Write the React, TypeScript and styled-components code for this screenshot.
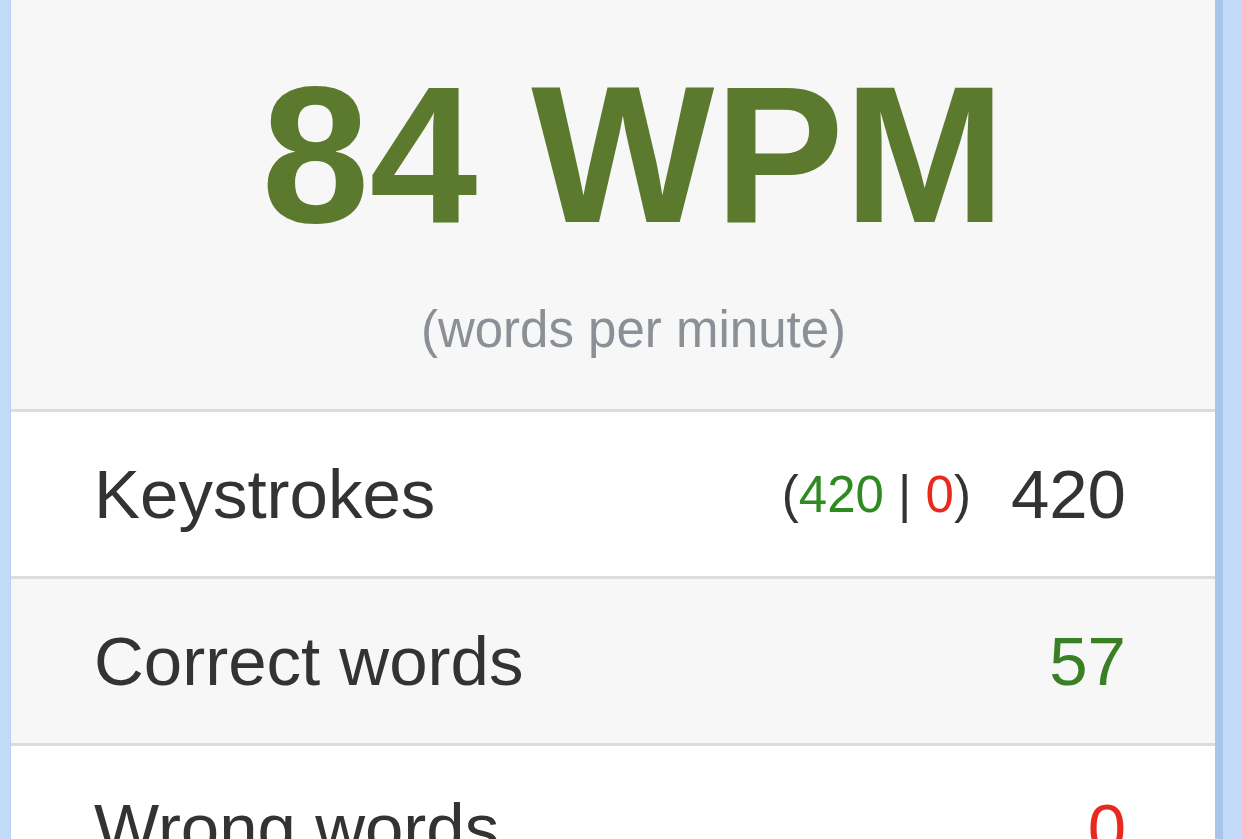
import styled, { createGlobalStyle } from 'styled-components';

const GlobalStyle = createGlobalStyle`
	html, body {
		margin: 0;
		padding: 0;
		height: 100%;
		overflow: hidden;
		background: #c3dbf8;
		font-family: "Liberation Sans", Arial, sans-serif;
	}
	#root {
		height: 100%;
	}
`;

type Tone = 'plain' | 'good' | 'bad';

const stats: { label: string; value: string; tone: Tone; detail?: [string, string] }[] = [
	{ label: 'Keystrokes', value: '420', tone: 'plain', detail: ['420', '0'] },
	{ label: 'Correct words', value: '57', tone: 'good' },
	{ label: 'Wrong words', value: '0', tone: 'bad' },
];

const toneColor = (tone: Tone) => (tone === 'good' ? '#3a7f24' : tone === 'bad' ? '#e8291d' : '#333333');

export default function App() {
	return (
		<>
			<GlobalStyle />
			<Page>
				<Panel>
					<Result>
						<Wpm>84 WPM</Wpm>
						<Unit>(words per minute)</Unit>
					</Result>
					<Table>
						{stats.map((s, i) => (
							<Row key={s.label} $striped={i % 2 === 1}>
								<Label>{s.label}</Label>
								<Values>
									{s.detail && (
										<Detail>
											(<Good>{s.detail[0]}</Good> | <Bad>{s.detail[1]}</Bad>)
										</Detail>
									)}
									<Value $tone={s.tone}>{s.value}</Value>
								</Values>
							</Row>
						))}
					</Table>
				</Panel>
			</Page>
		</>
	);
}

const Page = styled.div`
	height: 100%;
	display: flex;
	padding-left: 10px;
	box-sizing: border-box;
`;

const Panel = styled.div`
	width: 1213px;
	height: 100%;
	background: #ffffff;
	border-left: 1px solid #b8d1f2;
	border-right: 8px solid #a9c5e9;
	box-sizing: border-box;
	overflow: hidden;
`;

const Result = styled.div`
	background: #f7f7f7;
	padding: 58px 0 54px 41px;
	display: flex;
	flex-direction: column;
	align-items: center;
`;

const Wpm = styled.div`
	font-size: 194px;
	line-height: 1;
	font-weight: 700;
	color: #5c7a2e;
	white-space: nowrap;
`;

const Unit = styled.div`
	margin-top: 52px;
	font-size: 51px;
	line-height: 1;
	color: #8b9096;
`;

const Table = styled.div`
	display: flex;
	flex-direction: column;
`;

const Row = styled.div<{ $striped: boolean }>`
	display: flex;
	align-items: center;
	justify-content: space-between;
	height: 164px;
	padding: 0 89px 0 83px;
	border-top: 3px solid #dcdcdc;
	background: ${(p) => (p.$striped ? '#f7f7f7' : '#ffffff')};
	flex-shrink: 0;
`;

const Label = styled.span`
	font-size: 69px;
	color: #333333;
`;

const Values = styled.div`
	display: flex;
	align-items: center;
`;

const Detail = styled.span`
	font-size: 51px;
	color: #333333;
	margin-right: 40px;
`;

const Good = styled.span`
	color: #2f8a22;
`;

const Bad = styled.span`
	color: #e8291d;
`;

const Value = styled.span<{ $tone: Tone }>`
	font-size: 69px;
	color: ${(p) => toneColor(p.$tone)};
`;
